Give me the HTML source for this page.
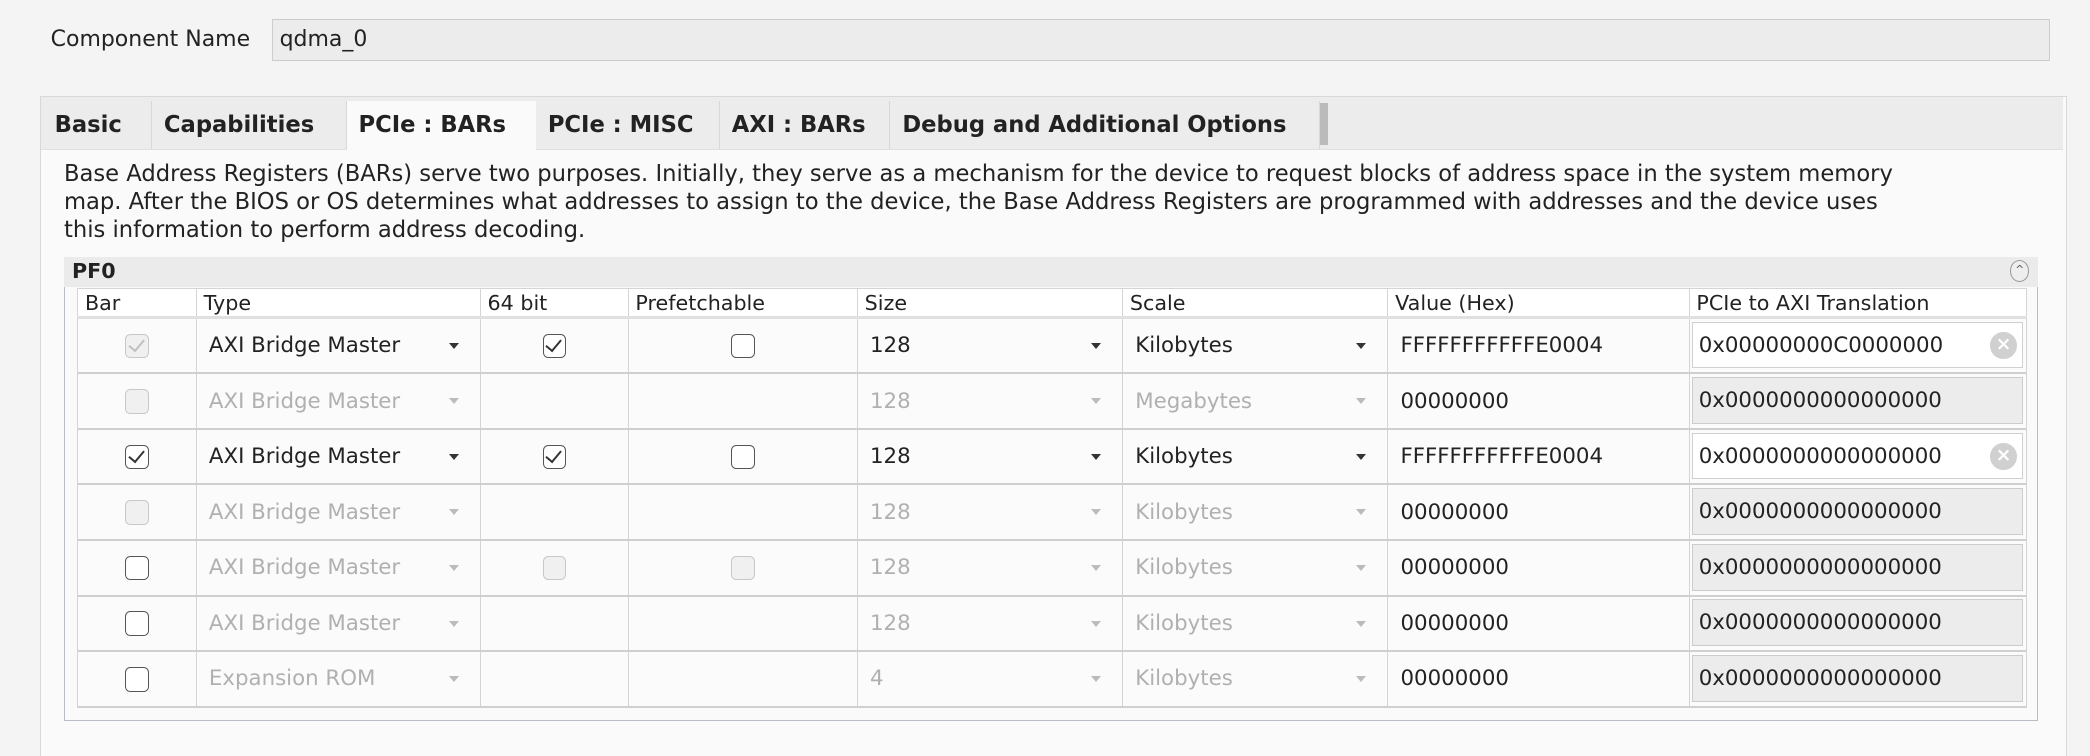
<!DOCTYPE html>
<html><head><style>
html,body{margin:0;padding:0;background:#f4f4f4;overflow:hidden}
#root{width:1568px;height:567px;position:relative;zoom:1.33291;font-family:"DejaVu Sans","Liberation Sans",sans-serif;color:#222;font-size:16px}
.abs{position:absolute}
.tab{position:absolute;top:76px;height:36px;line-height:37px;font-weight:bold;font-size:17px;padding-left:9px;box-sizing:border-box;border-right:1px solid #d8d8d8;color:#222;white-space:nowrap}
table{border-collapse:collapse;position:absolute;left:58px;top:216px;width:1462px;table-layout:fixed;background:#fbfbfb}
td{border:1px solid #d4d4d4;border-bottom:2px solid #d0d0d0;height:41.7px;padding:0 0 0 9px;font-size:16px;white-space:nowrap;position:relative;box-sizing:border-box;overflow:hidden}
tr.h td{height:22px;font-size:15.5px;background:#fff;border-bottom:3px solid #e0e0e0;padding-left:5px}
.dis{color:#b0b0b0}
.arr{position:absolute;right:16px;top:18px;width:0;height:0;border-left:4px solid transparent;border-right:4px solid transparent;border-top:5px solid #333}
.dis .arr{border-top-color:#bbb}
.cb{display:inline-block;width:16px;height:17px;border:1.5px solid #555;border-radius:4px;background:#fff;vertical-align:middle;position:relative}
.cb.g{border-color:#c8c8c8;background:#f0f0f0}
.ck::after{content:"";position:absolute;left:4px;top:1px;width:5px;height:10px;border:solid #333;border-width:0 2px 2px 0;transform:rotate(40deg)}
.cb.g.ck::after{border-color:#c0c0c0}
.c{text-align:center;padding:0}
.tin{position:absolute;left:2px;right:2px;top:2px;bottom:3px;border:1px solid #d0d0d0;background:#fff;padding-left:4px;line-height:34px;box-sizing:border-box}
.tin.g{background:#ececec;border-color:#ccc}
.x{position:absolute;right:4px;top:7px;width:20px;height:20px;border-radius:50%;background:#d0d0d0;color:#fff;font-size:14px;line-height:20px;text-align:center;font-weight:bold}
</style></head><body><div id="root">
<div class="abs" style="left:38px;top:20px;font-size:16.5px">Component Name</div>
<div class="abs" style="left:204px;top:14px;width:1334px;height:32px;border:1px solid #ccc;background:#ececec;box-sizing:border-box;padding-left:5px;line-height:30px;font-size:16.5px">qdma_0</div>
<div class="abs" style="left:30px;top:72px;width:1519px;height:500px;border:1px solid #d8d8d8;background:#fafafa"></div>
<div class="abs" style="left:31px;top:73px;width:1517px;height:39px;background:#ececec;border-bottom:1px solid #e0e0e0"></div>
<div class="tab" style="left:32px;width:82px">Basic</div>
<div class="tab" style="left:114px;width:146px">Capabilities</div>
<div class="tab" style="left:260px;width:142px;background:#fafafa;height:37px;border-right:none">PCIe : BARs</div>
<div class="tab" style="left:402px;width:138px">PCIe : MISC</div>
<div class="tab" style="left:540px;width:128px">AXI : BARs</div>
<div class="tab" style="left:668px;width:322px">Debug and Additional Options</div>
<div class="abs" style="left:990px;top:77px;width:6px;height:32px;background:#bbb"></div>
<div class="abs" style="left:48px;top:121px;white-space:nowrap;font-size:17px;line-height:21px;color:#222">Base Address Registers (BARs) serve two purposes. Initially, they serve as a mechanism for the device to request blocks of address space in the system memory<br>map. After the BIOS or OS determines what addresses to assign to the device, the Base Address Registers are programmed with addresses and the device uses<br>this information to perform address decoding.</div>
<div class="abs" style="left:48px;top:193px;width:1481px;height:348px;border:1px solid #b8bcc8;border-top:none;background:#fafafa;box-sizing:border-box"></div>
<div class="abs" style="left:48px;top:193px;width:1481px;height:22px;background:#ebebeb;font-weight:bold;font-size:15.5px;line-height:22px;padding-left:6px;box-sizing:border-box">PF0</div>
<div class="abs" style="left:1508px;top:195px;width:13px;height:15px;border:1px solid #999;border-radius:50%;background:#eee;font-size:8px;text-align:center;line-height:14px;color:#555">^</div>
<table>
<colgroup><col style="width:89px"><col style="width:213px"><col style="width:111px"><col style="width:172px"><col style="width:199px"><col style="width:199px"><col style="width:226px"><col style="width:253px"></colgroup>
<tr class="h"><td>Bar</td><td>Type</td><td>64 bit</td><td>Prefetchable</td><td>Size</td><td>Scale</td><td>Value (Hex)</td><td>PCIe to AXI Translation</td></tr>
<tr><td class="c"><span class="cb g ck"></span></td><td>AXI Bridge Master<span class="arr"></span></td><td class="c"><span class="cb ck"></span></td><td class="c"><span class="cb"></span></td><td>128<span class="arr"></span></td><td>Kilobytes<span class="arr"></span></td><td>FFFFFFFFFFFE0004</td><td><div class="tin">0x00000000C0000000<span class="x">×</span></div></td></tr>
<tr class="dis"><td class="c"><span class="cb g"></span></td><td>AXI Bridge Master<span class="arr"></span></td><td></td><td></td><td>128<span class="arr"></span></td><td>Megabytes<span class="arr"></span></td><td style="color:#222">00000000</td><td style="color:#222"><div class="tin g">0x0000000000000000</div></td></tr>
<tr><td class="c"><span class="cb ck"></span></td><td>AXI Bridge Master<span class="arr"></span></td><td class="c"><span class="cb ck"></span></td><td class="c"><span class="cb"></span></td><td>128<span class="arr"></span></td><td>Kilobytes<span class="arr"></span></td><td>FFFFFFFFFFFE0004</td><td><div class="tin">0x0000000000000000<span class="x">×</span></div></td></tr>
<tr class="dis"><td class="c"><span class="cb g"></span></td><td>AXI Bridge Master<span class="arr"></span></td><td></td><td></td><td>128<span class="arr"></span></td><td>Kilobytes<span class="arr"></span></td><td style="color:#222">00000000</td><td style="color:#222"><div class="tin g">0x0000000000000000</div></td></tr>
<tr class="dis"><td class="c"><span class="cb"></span></td><td>AXI Bridge Master<span class="arr"></span></td><td class="c"><span class="cb g"></span></td><td class="c"><span class="cb g"></span></td><td>128<span class="arr"></span></td><td>Kilobytes<span class="arr"></span></td><td style="color:#222">00000000</td><td style="color:#222"><div class="tin g">0x0000000000000000</div></td></tr>
<tr class="dis"><td class="c"><span class="cb"></span></td><td>AXI Bridge Master<span class="arr"></span></td><td></td><td></td><td>128<span class="arr"></span></td><td>Kilobytes<span class="arr"></span></td><td style="color:#222">00000000</td><td style="color:#222"><div class="tin g">0x0000000000000000</div></td></tr>
<tr class="dis"><td class="c"><span class="cb"></span></td><td>Expansion ROM<span class="arr"></span></td><td></td><td></td><td>4<span class="arr"></span></td><td>Kilobytes<span class="arr"></span></td><td style="color:#222">00000000</td><td style="color:#222"><div class="tin g">0x0000000000000000</div></td></tr>
</table>
</div></body></html>
